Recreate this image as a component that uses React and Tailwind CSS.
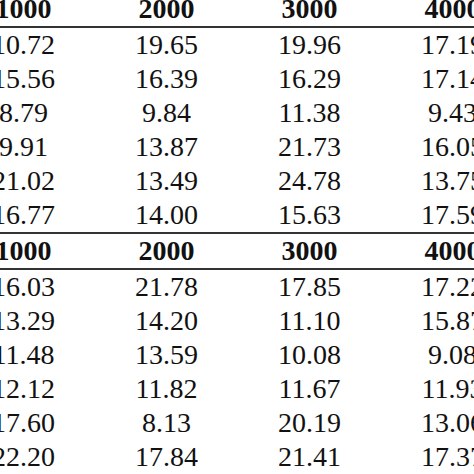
import React from "react";

// Two blocks of the results table, each with a bold header row of sizes
const blocks = [
  {
    header: ["1000", "2000", "3000", "4000"],
    rows: [
      ["10.72", "19.65", "19.96", "17.19"],
      ["15.56", "16.39", "16.29", "17.14"],
      ["8.79", "9.84", "11.38", "9.43"],
      ["9.91", "13.87", "21.73", "16.05"],
      ["21.02", "13.49", "24.78", "13.75"],
      ["16.77", "14.00", "15.63", "17.59"],
    ],
  },
  {
    header: ["1000", "2000", "3000", "4000"],
    rows: [
      ["16.03", "21.78", "17.85", "17.22"],
      ["13.29", "14.20", "11.10", "15.87"],
      ["11.48", "13.59", "10.08", "9.08"],
      ["12.12", "11.82", "11.67", "11.93"],
      ["17.60", "8.13", "20.19", "13.06"],
      ["22.20", "17.84", "21.41", "17.37"],
    ],
  },
];

const Row = ({ cells, bold }) => (
  <div className="grid grid-cols-[143px_143px_143px_143px] h-[34px] leading-[34px]">
    {cells.map((c, i) => (
      <div
        key={i}
        className={`text-center whitespace-nowrap ${bold ? "font-bold" : ""}`}
      >
        {c}
      </div>
    ))}
  </div>
);

export default function App() {
  return (
    <div className="w-[474px] h-[474px] overflow-hidden bg-white">
      <div
        className="-mt-2 -ml-[48px] w-[572px] text-[28px] text-[#111]"
        style={{ fontFamily: '"Liberation Serif", "Times New Roman", serif' }}
      >
        {blocks.map((b, bi) => (
          <div key={bi}>
            {bi > 0 && <div className="h-[2px] bg-[#333]" />}
            <Row cells={b.header} bold />
            <div className="h-[2px] bg-[#333]" />
            {b.rows.map((r, ri) => (
              <Row key={ri} cells={r} />
            ))}
          </div>
        ))}
      </div>
    </div>
  );
}
